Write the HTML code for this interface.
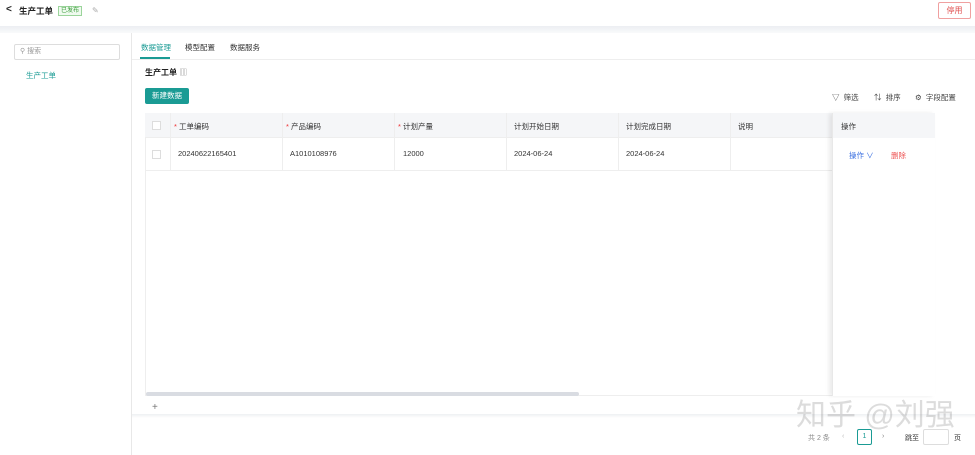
<!DOCTYPE html>
<html><head><meta charset="utf-8"><style>
*{box-sizing:border-box;margin:0;padding:0}
body{width:975px;height:455px;overflow:hidden;background:#fff;font-family:"Liberation Sans","Noto Sans CJK SC",sans-serif;font-size:8px;color:#333;position:relative}
.a{position:absolute;white-space:nowrap}
</style></head><body>
<div class="a" style="left:0;top:26px;width:975px;height:7px;background:linear-gradient(#eceef2,#f9fafb)"></div>
<div class="a" style="left:6px;top:4px;font-size:10px;font-weight:bold;color:#222">&lt;</div>
<div class="a" style="left:19px;top:5px;font-size:8.5px;font-weight:bold;color:#222">生产工单</div>
<div class="a" style="left:58px;top:6px;width:24px;height:10px;border:1px solid #9bd49b;background:#effaef;color:#3a9d3a;font-size:6px;line-height:8px;text-align:center">已发布</div>
<div class="a" style="left:92px;top:6px;color:#aaa;font-size:8px">✎</div>
<div class="a" style="left:938px;top:2px;width:33px;height:17px;border:1px solid #f0a0a0;border-radius:2px;color:#e05050;font-size:8px;line-height:15px;text-align:center">停用</div>

<div class="a" style="left:131px;top:33px;width:1px;height:422px;background:#e8e8e8"></div>
<div class="a" style="left:14px;top:44px;width:106px;height:16px;border:1px solid #ddd;border-radius:2px;color:#999;font-size:7px;line-height:14px;padding-left:5px">⚲ 搜索</div>
<div class="a" style="left:26px;top:70px;color:#1a9b94;font-size:7.5px">生产工单</div>

<div class="a" style="left:132px;top:59px;width:843px;height:1px;background:#eee"></div>
<div class="a" style="left:141px;top:42px;color:#1a9b94;font-size:7.5px">数据管理</div>
<div class="a" style="left:140px;top:57px;width:30px;height:2px;background:#1a9b94"></div>
<div class="a" style="left:185px;top:42px;font-size:7.5px">模型配置</div>
<div class="a" style="left:230px;top:42px;font-size:7.5px">数据服务</div>
<div class="a" style="left:145px;top:67px;font-size:8px;font-weight:bold;color:#222">生产工单 <span style="font-weight:normal;color:#888">▥</span></div>
<div class="a" style="left:145px;top:88px;width:44px;height:16px;background:#1a9b94;border-radius:2px;color:#fff;font-size:7.5px;line-height:16px;text-align:center">新建数据</div>
<div class="a" style="left:832px;top:92px;font-size:7.5px;color:#444">▽&nbsp; 筛选</div>
<div class="a" style="left:874px;top:92px;font-size:7.5px;color:#444">⇅&nbsp; 排序</div>
<div class="a" style="left:915px;top:92px;font-size:7.5px;color:#444">⚙&nbsp; 字段配置</div>

<div class="a" style="left:145px;top:113px;width:790px;height:283px;border:1px solid #eee"></div>
<div class="a" style="left:145px;top:113px;width:790px;height:25px;background:#f5f6f8;border-bottom:1px solid #eee"></div>
<div class="a" style="left:145px;top:170px;width:688px;height:1px;background:#eee"></div>
<div class="a" style="left:170px;top:113px;width:1px;height:58px;background:#eee"></div>
<div class="a" style="left:282px;top:113px;width:1px;height:58px;background:#eee"></div>
<div class="a" style="left:394px;top:113px;width:1px;height:58px;background:#eee"></div>
<div class="a" style="left:506px;top:113px;width:1px;height:58px;background:#eee"></div>
<div class="a" style="left:618px;top:113px;width:1px;height:58px;background:#eee"></div>
<div class="a" style="left:730px;top:113px;width:1px;height:58px;background:#eee"></div>
<div class="a" style="left:832px;top:113px;width:103px;height:283px;box-shadow:-3px 0 4px rgba(0,0,0,.08);border-left:1px solid #e8e8e8;background:#fff"></div>
<div class="a" style="left:833px;top:113px;width:102px;height:25px;background:#f5f6f8"></div>
<div class="a" style="left:152px;top:121px;width:9px;height:9px;border:1px solid #ddd;background:#fff"></div>
<div class="a" style="left:152px;top:150px;width:9px;height:9px;border:1px solid #ddd;background:#fff"></div>
<div class="a" style="top:121px;left:174px;font-size:7.5px"><span style="color:#e33">*</span> 工单编码</div>
<div class="a" style="top:121px;left:286px;font-size:7.5px"><span style="color:#e33">*</span> 产品编码</div>
<div class="a" style="top:121px;left:398px;font-size:7.5px"><span style="color:#e33">*</span> 计划产量</div>
<div class="a" style="top:121px;left:514px;font-size:7.5px">计划开始日期</div>
<div class="a" style="top:121px;left:626px;font-size:7.5px">计划完成日期</div>
<div class="a" style="top:121px;left:738px;font-size:7.5px">说明</div>
<div class="a" style="top:121px;left:841px;font-size:7.5px">操作</div>
<div class="a" style="top:149px;left:178px;font-size:7.5px">20240622165401</div>
<div class="a" style="top:149px;left:290px;font-size:7.5px">A1010108976</div>
<div class="a" style="top:149px;left:403px;font-size:7.5px">12000</div>
<div class="a" style="top:149px;left:514px;font-size:7.5px">2024-06-24</div>
<div class="a" style="top:149px;left:626px;font-size:7.5px">2024-06-24</div>
<div class="a" style="top:150px;left:849px;font-size:7.5px;color:#3a6fe0">操作 ∨</div>
<div class="a" style="top:150px;left:891px;font-size:7.5px;color:#e55">删除</div>
<div class="a" style="left:146px;top:392px;width:433px;height:4px;background:#d9dce2;border-radius:2px"></div>
<div class="a" style="left:152px;top:402px;color:#777;font-size:10px">+</div>

<div class="a" style="left:132px;top:414px;width:843px;height:4px;background:linear-gradient(#eef0f3,#fff)"></div>
<div class="a" style="left:796px;top:398px;font-size:30px;line-height:36px;color:rgba(140,140,140,.3)">知乎 @刘强</div>
<div class="a" style="left:808px;top:433px;font-size:7px;color:#888">共 2 条</div>
<div class="a" style="left:842px;top:433px;font-size:7px;color:#bbb">‹</div>
<div class="a" style="left:857px;top:429px;width:15px;height:16px;border:1px solid #1a9b94;border-radius:2px;color:#1a9b94;font-size:7px;text-align:center;line-height:14px;background:#fff">1</div>
<div class="a" style="left:882px;top:433px;font-size:7px;color:#888">›</div>
<div class="a" style="left:905px;top:433px;font-size:7px;color:#333">跳至</div>
<div class="a" style="left:923px;top:429px;width:26px;height:16px;border:1px solid #ddd;border-radius:2px;background:#fff"></div>
<div class="a" style="left:954px;top:433px;font-size:7px;color:#333">页</div>
</body></html>
